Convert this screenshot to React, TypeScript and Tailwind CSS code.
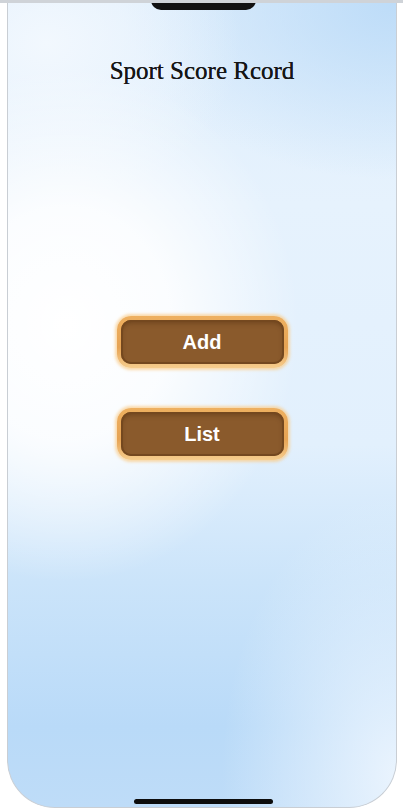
function MenuButton({ label }: { label: string }) {
  return (
    <button className="w-[171px] h-[52px] rounded-[14px] bg-[linear-gradient(180deg,#eeb060_0%,#e6a354_60%,#f6cd8e_100%)] p-[4px] shadow-[0_0_3px_2px_rgba(250,205,140,0.75)]">
      <span className="flex h-full w-full items-center justify-center rounded-[10px] bg-[#8a5a2c] shadow-[inset_0_0_0_2px_#74481f,inset_0_3px_5px_rgba(60,30,5,0.35)] text-[20px] font-bold text-white [font-family:'Liberation_Sans',Arial,sans-serif]">
        {label}
      </span>
    </button>
  );
}

export default function App() {
  return (
    <div className="h-[812px] w-[403px] bg-white overflow-hidden">
      <div className="h-[3px] w-full bg-[#cfd3d8]" />
      <div className="relative mx-[7px] h-[805px] w-[390px] rounded-b-[48px] border-x border-b border-[#c9ced4] overflow-hidden bg-[radial-gradient(ellipse_60%_32%_at_15%_40%,#ffffff_0%,rgba(255,255,255,0.85)_45%,rgba(255,255,255,0)_100%),radial-gradient(ellipse_50%_20%_at_10%_5%,rgba(242,248,254,1)_0%,rgba(242,248,254,0)_100%),radial-gradient(ellipse_45%_35%_at_100%_96%,rgba(236,245,254,0.95)_0%,rgba(236,245,254,0)_100%),radial-gradient(ellipse_70%_22%_at_100%_0%,#bddcf8_0%,rgba(189,220,248,0)_100%),linear-gradient(180deg,#dfeefc_0%,#e6f2fd_25%,#e2f0fd_55%,#cbe4fa_72%,#b9daf8_90%,#bedcf8_100%)]">
        {/* notch */}
        <div className="absolute left-[143px] top-[-3px] h-[10px] w-[105px] rounded-b-[10px] bg-[#111]" />

        <h1 className="pt-[53px] text-center text-[25px] leading-[30px] text-[#161616] [text-shadow:0_0_0.5px_#161616] [font-family:'Liberation_Serif','Times_New_Roman',serif]">
          Sport Score Rcord
        </h1>

        <div className="mt-[230px] flex flex-col items-center gap-[40px]">
          <MenuButton label="Add" />
          <MenuButton label="List" />
        </div>

        {/* home indicator */}
        <div className="absolute bottom-[3px] left-[126px] h-[5px] w-[139px] rounded-full bg-[#0d0d0d]" />
      </div>
    </div>
  );
}
